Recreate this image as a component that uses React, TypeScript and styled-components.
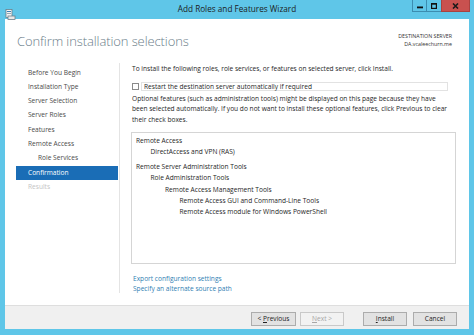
import React from 'react';
import styled, { createGlobalStyle } from 'styled-components';

const GlobalStyle = createGlobalStyle`
  html, body {
    margin: 0;
    padding: 0;
    background: #5fc6e8;
  }
  body {
    font-family: "Open Sans", "Liberation Sans", sans-serif;
    color: #262626;
  }
`;

const Window = styled.div`
  width: 474px;
  height: 335px;
  display: flex;
  flex-direction: column;
  background: #5fc6e8;
`;

const TitleBar = styled.div`
  height: 19px;
  display: flex;
  align-items: flex-start;
  position: relative;
`;

const AppIcon = styled.div`
  width: 11px;
  height: 11px;
  margin: 3px 0 0 5px;
`;

const Title = styled.div`
  position: absolute;
  left: 0;
  right: 0;
  top: 3px;
  text-align: center;
  font-size: 8.2px;
  color: #1c1c1c;
`;

const Controls = styled.div`
  margin-left: auto;
  margin-right: 4px;
  display: flex;
  height: 12px;
`;

const CtrlButton = styled.div<{ $close?: boolean; $w: number }>`
  width: ${p => p.$w}px;
  height: 12px;
  display: flex;
  align-items: center;
  justify-content: center;
  background: ${p => (p.$close ? '#c9514f' : '#5fc6e8')};
  border: 1px solid ${p => (p.$close ? '#a94240' : '#3c8db0')};
  border-top: none;
  box-sizing: border-box;
  margin-left: -1px;
`;

const Client = styled.div`
  flex: 1;
  margin: 0 5px 6px 5px;
  background: #fff;
  display: flex;
  flex-direction: column;
`;

const Header = styled.div`
  height: 44px;
  display: flex;
  align-items: flex-start;
  justify-content: space-between;
  padding: 0 17px 0 12px;
`;

const Heading = styled.div`
  margin-top: 13px;
  font-size: 13px;
  font-weight: 300;
  color: #6a7d89;
  letter-spacing: -0.1px;
`;

const Dest = styled.div`
  margin-top: 13px;
  text-align: right;
  font-size: 5.3px;
  line-height: 8px;
  color: #333;
`;

const Body = styled.div`
  flex: 1;
  display: flex;
  min-height: 0;
`;

const Nav = styled.div`
  width: 113px;
  flex-shrink: 0;
  padding-top: 2.5px;
  display: flex;
  flex-direction: column;
`;

const NavItem = styled.div<{ $active?: boolean; $disabled?: boolean; $indent?: boolean }>`
  height: 14.3px;
  line-height: 14.3px;
  margin-left: 11px;
  padding-left: ${p => (p.$indent ? 22 : 12)}px;
  font-size: 6.6px;
  background: ${p => (p.$active ? '#1a6db6' : 'transparent')};
  color: ${p => (p.$active ? '#fff' : p.$disabled ? '#c4c4c4' : '#4a4a4a')};
`;

const Divider = styled.div`
  width: 1px;
  flex-shrink: 0;
  background: #e4e4e4;
  margin: 0 0 12px 1px;
`;

const Content = styled.div`
  flex: 1;
  min-width: 0;
  padding: 1px 13px 0 11px;
  display: flex;
  flex-direction: column;
  font-size: 6.6px;
  line-height: 10.5px;
`;

const Intro = styled.div`
  padding-left: 1px;
`;

const CheckRow = styled.div`
  display: flex;
  align-items: center;
  margin-top: 7px;
  padding-left: 1px;
`;

const CheckBox = styled.div`
  width: 7px;
  height: 7px;
  border: 1px solid #8a8a8a;
  box-sizing: border-box;
  background: #fff;
  margin-right: 2px;
`;

const CheckLabel = styled.div`
  width: 307px;
  height: 9px;
  line-height: 8px;
  border: 1px solid #e2e2e2;
  box-sizing: border-box;
  padding-left: 2px;
`;

const Note = styled.div`
  margin-top: 3px;
  padding-left: 1px;
`;

const NoteLine = styled.div`
  white-space: nowrap;
`;

const SelBox = styled.div`
  margin-top: 7px;
  height: 132px;
  border: 1px solid #d5d5d5;
  box-sizing: border-box;
  padding: 2px 0 0 4px;
  line-height: 11.4px;
`;

const Group = styled.div`
  margin-bottom: 3px;
`;

const Line = styled.div<{ $level: number }>`
  padding-left: ${p => p.$level * 14.5}px;
  white-space: nowrap;
`;

const Links = styled.div`
  margin-top: 9.5px;
  padding-left: 2px;
  line-height: 10px;
`;

const LinkText = styled.div`
  color: #2f80b3;
`;

const Footer = styled.div`
  height: 24px;
  border-top: 1px solid #dedede;
  background: #f0f0f0;
  display: flex;
  align-items: flex-start;
  justify-content: flex-end;
  padding: 6px 12px 0 0;
  box-sizing: border-box;
`;

const Btn = styled.div<{ $disabled?: boolean; $gap: number }>`
  width: 44px;
  height: 14px;
  margin-left: ${p => p.$gap}px;
  box-sizing: border-box;
  border: 1px solid ${p => (p.$disabled ? '#c9c9c9' : '#acacac')};
  background: ${p => (p.$disabled ? '#f2f2f2' : '#e2e2e2')};
  color: ${p => (p.$disabled ? '#a6a6a6' : '#222')};
  font-size: 6.6px;
  line-height: 12px;
  text-align: center;
`;

const U = styled.span`
  text-decoration: underline;
`;

const navItems = [
  { label: 'Before You Begin' },
  { label: 'Installation Type' },
  { label: 'Server Selection' },
  { label: 'Server Roles' },
  { label: 'Features' },
  { label: 'Remote Access' },
  { label: 'Role Services', indent: true },
  { label: 'Confirmation', active: true },
  { label: 'Results', disabled: true },
];

const noteLines = [
  'Optional features (such as administration tools) might be displayed on this page because they have',
  'been selected automatically. If you do not want to install these optional features, click Previous to clear',
  'their check boxes.',
];

const selections = [
  [
    { text: 'Remote Access', level: 0 },
    { text: 'DirectAccess and VPN (RAS)', level: 1 },
  ],
  [
    { text: 'Remote Server Administration Tools', level: 0 },
    { text: 'Role Administration Tools', level: 1 },
    { text: 'Remote Access Management Tools', level: 2 },
    { text: 'Remote Access GUI and Command-Line Tools', level: 3 },
    { text: 'Remote Access module for Windows PowerShell', level: 3 },
  ],
];

export default function App() {
  return (
    <Window>
      <GlobalStyle />
      <TitleBar>
        <AppIcon>
          <svg width="11" height="11" viewBox="0 0 11 11">
            <rect x="1" y="0.5" width="6" height="8" fill="#f4f4f4" stroke="#6a7f8c" strokeWidth="0.8" />
            <rect x="2" y="2" width="4" height="1" fill="#3d7fb3" />
            <rect x="2" y="4" width="4" height="1" fill="#9aa8b0" />
            <rect x="3" y="7" width="7" height="3.5" fill="#e8e8e8" stroke="#6a7f8c" strokeWidth="0.8" />
          </svg>
        </AppIcon>
        <Title>Add Roles and Features Wizard</Title>
        <Controls>
          <CtrlButton $w={15}>
            <svg width="6" height="6" viewBox="0 0 6 6">
              <rect x="0" y="3.5" width="6" height="1.8" fill="#111" />
            </svg>
          </CtrlButton>
          <CtrlButton $w={16}>
            <svg width="6" height="6" viewBox="0 0 6 6">
              <rect x="0.6" y="0.6" width="4.8" height="4.8" fill="none" stroke="#111" strokeWidth="1.2" />
              <rect x="0" y="0" width="6" height="1.6" fill="#111" />
            </svg>
          </CtrlButton>
          <CtrlButton $w={29} $close>
            <svg width="7" height="6" viewBox="0 0 7 6">
              <path d="M1 0.5 L6 5.5 M6 0.5 L1 5.5" stroke="#1a1a1a" strokeWidth="1.6" />
            </svg>
          </CtrlButton>
        </Controls>
      </TitleBar>
      <Client>
        <Header>
          <Heading>Confirm installation selections</Heading>
          <Dest>
            <div>DESTINATION SERVER</div>
            <div>DA.vcaleechurn.me</div>
          </Dest>
        </Header>
        <Body>
          <Nav>
            {navItems.map(item => (
              <NavItem
                key={item.label}
                $active={item.active}
                $disabled={item.disabled}
                $indent={item.indent}
              >
                {item.label}
              </NavItem>
            ))}
          </Nav>
          <Divider />
          <Content>
            <Intro>
              To install the following roles, role services, or features on selected server, click Install.
            </Intro>
            <CheckRow>
              <CheckBox />
              <CheckLabel>Restart the destination server automatically if required</CheckLabel>
            </CheckRow>
            <Note>
              {noteLines.map(text => (
                <NoteLine key={text}>{text}</NoteLine>
              ))}
            </Note>
            <SelBox>
              {selections.map((group, gi) => (
                <Group key={gi}>
                  {group.map(line => (
                    <Line key={line.text} $level={line.level}>
                      {line.text}
                    </Line>
                  ))}
                </Group>
              ))}
            </SelBox>
            <Links>
              <LinkText>Export configuration settings</LinkText>
              <LinkText>Specify an alternate source path</LinkText>
            </Links>
          </Content>
        </Body>
        <Footer>
          <Btn $gap={0} style={{ width: 45 }}>
            &lt; <U>P</U>revious
          </Btn>
          <Btn $gap={4} $disabled>
            <U>N</U>ext &gt;
          </Btn>
          <Btn $gap={19}>
            <U>I</U>nstall
          </Btn>
          <Btn $gap={6}>Cancel</Btn>
        </Footer>
      </Client>
    </Window>
  );
}
